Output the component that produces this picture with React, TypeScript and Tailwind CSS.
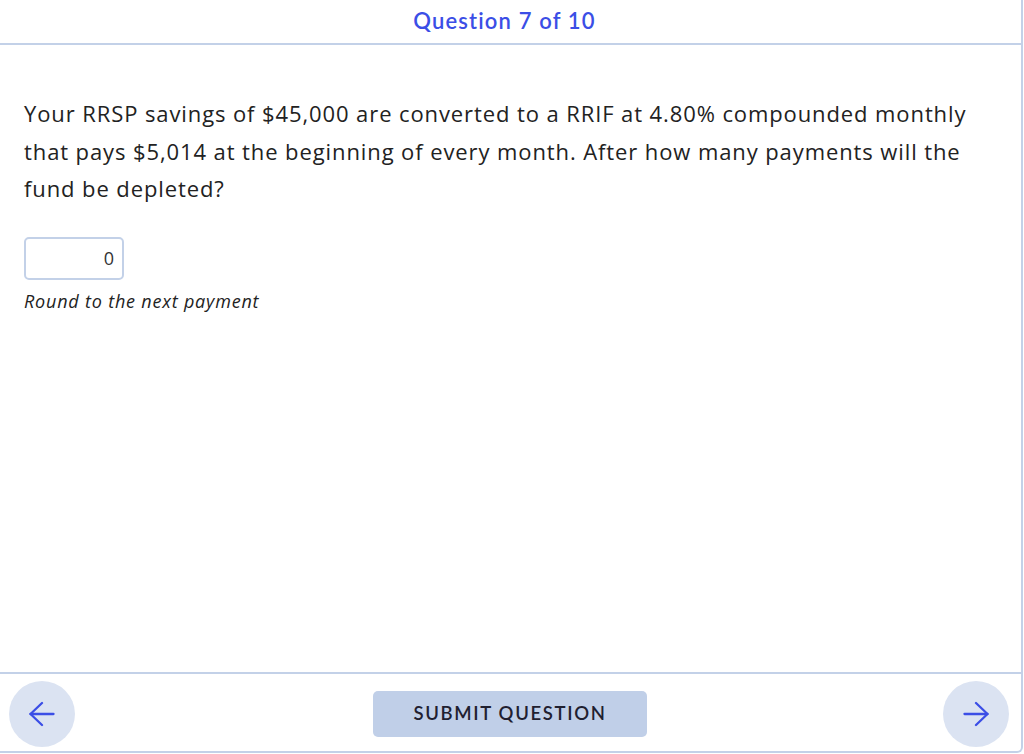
import React, { useState } from 'react';

const ArrowLeft = () => (
    <svg width="26" height="26" viewBox="0 0 26 26" fill="none" stroke="#3b4ee6" strokeWidth="2.3" strokeLinecap="round" strokeLinejoin="round">
        <path d="M1.5 13H24.5" />
        <path d="M13 2L1.5 13L13 24" />
    </svg>
);

const ArrowRight = () => (
    <svg width="26" height="26" viewBox="0 0 26 26" fill="none" stroke="#3b4ee6" strokeWidth="2.3" strokeLinecap="round" strokeLinejoin="round">
        <path d="M1.5 13H24.5" />
        <path d="M13 2L24.5 13L13 24" />
    </svg>
);

export default function App() {
    const [answer, setAnswer] = useState('0');

    return (
        <div className="w-[1024px] h-[754px] bg-white overflow-hidden">
            <div className="w-[1023px] h-[753px] flex flex-col border-r-2 border-b-2 border-[#c3d1e8] rounded-br-[6px]">
                <div className="h-[45px] shrink-0 flex items-center justify-center border-b-2 border-[#c3d1e8] pb-[3px]">
                    <span className="text-[22px] text-[#3b4ee6] font-semibold tracking-[1.15px] ml-[-12px]" style={{ fontFamily: 'Lato, "Open Sans", sans-serif' }}>
                        Question 7 of 10
                    </span>
                </div>

                <div className="flex-1 px-6 pt-[50px]" style={{ fontFamily: '"Open Sans", sans-serif' }}>
                    <p className="text-[22px] leading-[37.5px] text-[#222] tracking-[0.9px] max-w-[975px]">
                        Your RRSP savings of $45,000 are converted to a RRIF at 4.80% compounded monthly that pays $5,014 at the beginning of every month. After how many payments will the fund be depleted?
                    </p>
                    <input
                        value={answer}
                        onChange={(e) => setAnswer(e.target.value)}
                        className="mt-[29px] w-[100px] h-[43px] border-2 border-[#c3d1e8] rounded-[5px] text-right pr-[8px] text-[18px] text-[#333] outline-none block"
                    />
                    <p className="mt-[8px] text-[18px] italic text-[#222] tracking-[0.8px]">Round to the next payment</p>
                </div>

                <div className="h-[79px] shrink-0 border-t-2 border-[#c3d1e8] flex items-center justify-between pl-[9px] pr-[12px] pt-[3px]">
                    <button className="w-[66px] h-[66px] rounded-full bg-[#dbe3f2] flex items-center justify-center">
                        <ArrowLeft />
                    </button>
                    <button
                        className="w-[274px] h-[46px] rounded-[5px] bg-[#c0cfe8] text-[18.5px] font-semibold tracking-[1.65px] text-[#1f2030] ml-[2px]"
                        style={{ fontFamily: 'Lato, sans-serif' }}
                    >
                        SUBMIT QUESTION
                    </button>
                    <button className="w-[66px] h-[66px] rounded-full bg-[#dbe3f2] flex items-center justify-center">
                        <ArrowRight />
                    </button>
                </div>
            </div>
        </div>
    );
}
